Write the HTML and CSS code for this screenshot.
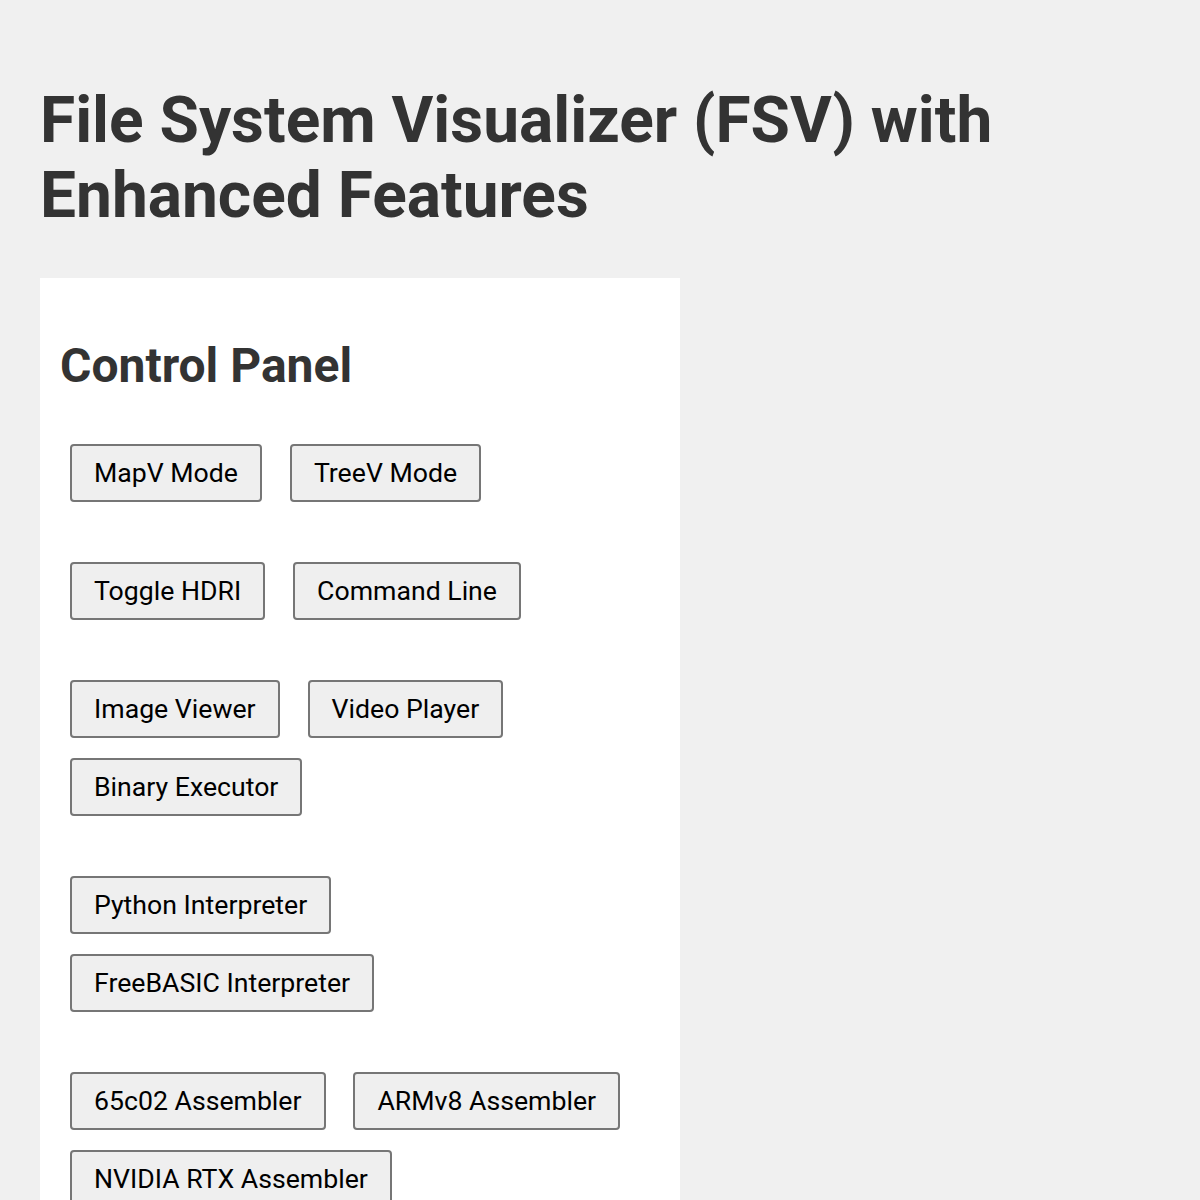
FILE: index.html
```html
<!DOCTYPE html>
<html lang="en">
  <head>
    <meta charset="utf-8" />
    <meta name="viewport" content="width=device-width, initial-scale=1.0" />
    <title>File System Visualizer</title>
    <link rel="stylesheet" href="styles.css">
  </head>
  <body>
    <h1>File System Visualizer (FSV) with Enhanced Features</h1>
    <div class="panel">
      <h2>Control Panel</h2>
      <div class="group">
        <button class="btn">MapV Mode</button>
        <button class="btn">TreeV Mode</button>
      </div>
      <div class="group">
        <button class="btn">Toggle HDRI</button>
        <button class="btn">Command Line</button>
      </div>
      <div class="group">
        <button class="btn">Image Viewer</button>
        <button class="btn">Video Player</button>
        <button class="btn">Binary Executor</button>
      </div>
      <div class="group">
        <button class="btn">Python Interpreter</button>
        <button class="btn">FreeBASIC Interpreter</button>
      </div>
      <div class="group">
        <button class="btn">65c02 Assembler</button>
        <button class="btn">ARMv8 Assembler</button>
        <button class="btn">NVIDIA RTX Assembler</button>
      </div>
    </div>
  </body>
</html>
```

FILE: styles.css
```css
html,
body {
  margin: 0;
  padding: 0;
  background-color: #f0f0f0;
}
body {
  padding: 40px;
  color: #333333;
  font-family: Roboto, "Liberation Sans", Arial, sans-serif;
}
h1 {
  margin: 43px 0 45px;
  font-size: 64px;
  font-weight: 700;
  line-height: 75px;
  max-width: 1000px;
}
.panel {
  width: 600px;
  padding: 20px;
  background: #ffffff;
}
h2 {
  margin: 40px 0;
  font-size: 48px;
  font-weight: 700;
  line-height: 56px;
}
.group {
  margin-bottom: 40px;
  font-size: 32px;
}
.btn {
  margin: 10px;
  padding: 11px 22px;
  font: 26.67px/32px Roboto, "Liberation Sans", Arial, sans-serif;
  color: #000000;
  background: #efefef;
  border: 2px solid #767676;
  border-radius: 4px;
  cursor: pointer;
}
.btn:hover {
  background: #e5e5e5;
}
```
